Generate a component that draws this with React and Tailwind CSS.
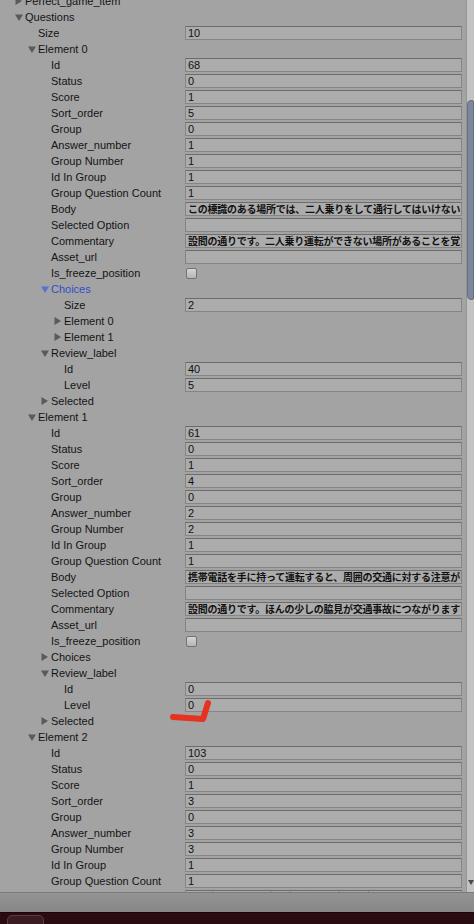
const padByLevel = {
  0: 'pl-[15px]',
  1: 'pl-[28px]',
  2: 'pl-[41px]',
  3: 'pl-[54px]',
};

const BODY0 = 'この標識のある場所では、二人乗りをして通行してはいけない';
const COMM0 = '設問の通りです。二人乗り運転ができない場所があることを覚えておきましょう';
const BODY1 = '携帯電話を手に持って運転すると、周囲の交通に対する注意がおろそかになります';
const COMM1 = '設問の通りです。ほんの少しの脇見が交通事故につながります';
const BODY2 = '交差点付近では、歩行者の動きに十分注意して運転しなければならない';

// [level, label, fold ('open' | 'closed' | null), kind ('field' | 'check' | null), value, blue]
const element = (level, v) => [
  [level + 1, 'Id', null, 'field', v.id],
  [level + 1, 'Status', null, 'field', '0'],
  [level + 1, 'Score', null, 'field', '1'],
  [level + 1, 'Sort_order', null, 'field', v.sort],
  [level + 1, 'Group', null, 'field', '0'],
  [level + 1, 'Answer_number', null, 'field', v.answer],
  [level + 1, 'Group Number', null, 'field', v.answer],
  [level + 1, 'Id In Group', null, 'field', '1'],
  [level + 1, 'Group Question Count', null, 'field', '1'],
  [level + 1, 'Body', null, 'field', v.body],
  [level + 1, 'Selected Option', null, 'field', ''],
  [level + 1, 'Commentary', null, 'field', v.comm],
  [level + 1, 'Asset_url', null, 'field', ''],
  [level + 1, 'Is_freeze_position', null, 'check'],
];

const rows = [
  [0, 'Perfect_game_item', 'closed'],
  [0, 'Questions', 'open'],
  [1, 'Size', null, 'field', '10'],
  [1, 'Element 0', 'open'],
  ...element(1, { id: '68', sort: '5', answer: '1', body: BODY0, comm: COMM0 }),
  [2, 'Choices', 'open', null, null, true],
  [3, 'Size', null, 'field', '2'],
  [3, 'Element 0', 'closed'],
  [3, 'Element 1', 'closed'],
  [2, 'Review_label', 'open'],
  [3, 'Id', null, 'field', '40'],
  [3, 'Level', null, 'field', '5'],
  [2, 'Selected', 'closed'],
  [1, 'Element 1', 'open'],
  ...element(1, { id: '61', sort: '4', answer: '2', body: BODY1, comm: COMM1 }),
  [2, 'Choices', 'closed'],
  [2, 'Review_label', 'open'],
  [3, 'Id', null, 'field', '0'],
  [3, 'Level', null, 'field', '0'],
  [2, 'Selected', 'closed'],
  [1, 'Element 2', 'open'],
  ...element(1, { id: '103', sort: '3', answer: '3', body: BODY2, comm: '' }),
];

const isJa = (s) => /[\u3000-\u9fff]/.test(s);

const Arrow = ({ fold, blue }) => {
  const fill = blue ? '#5a72c8' : '#5a5a5a';
  return (
    <span className="w-[10px] h-[16px] flex items-center shrink-0">
      {fold === 'open' && (
        <svg width="8" height="7" viewBox="0 0 8 7">
          <path d="M0 0.5 L8 0.5 L4 7 Z" fill={fill} />
        </svg>
      )}
      {fold === 'closed' && (
        <svg width="7" height="8" viewBox="0 0 7 8">
          <path d="M0.5 0 L7 4 L0.5 8 Z" fill={fill} />
        </svg>
      )}
    </span>
  );
};

const Row = ({ row }) => {
  const [level, label, fold, kind, value, blue] = row;
  return (
    <div className="flex h-[16px] items-center">
      <div className={`w-[185px] h-full flex items-center shrink-0 ${padByLevel[level]}`}>
        <Arrow fold={fold} blue={blue} />
        <span className={`whitespace-nowrap leading-none ${blue ? 'text-[#2f4fc9]' : 'text-[#141414]'}`}>
          {label}
        </span>
      </div>
      {kind === 'field' && (
        <div className="w-[277px] h-[14px] bg-[#acacac] border border-[#858585] border-t-[#6c6c6c] overflow-hidden flex items-center pl-[2px]">
          <span
            className={
              isJa(value)
                ? 'whitespace-nowrap text-[10px] tracking-[-0.25px] font-bold leading-none text-[#111]'
                : 'whitespace-nowrap leading-none text-[#111]'
            }
            style={isJa(value) ? { fontFamily: '"Noto Sans CJK JP", sans-serif' } : undefined}
          >
            {value}
          </span>
        </div>
      )}
      {kind === 'check' && (
        <div className="ml-[1px] w-[11px] h-[11px] rounded-[2px] border border-[#727272] bg-gradient-to-b from-[#d6d6d6] to-[#b4b4b4]" />
      )}
    </div>
  );
};

export default function App() {
  return (
    <div
      className="relative w-[474px] h-[924px] overflow-hidden bg-[#a3a3a3] text-[11px]"
      style={{ fontFamily: '"Liberation Sans", Arial, sans-serif' }}
    >
      <div className="flex h-[892px]">
        <div className="w-[466px] h-full overflow-hidden">
          <div className="-mt-[7px]">
            {rows.map((r, i) => (
              <Row key={i} row={r} />
            ))}
          </div>
        </div>
        <div className="w-[8px] h-full bg-[#c3c3c3] border-l border-[#969696] flex flex-col">
          <div className="mt-[100px] h-[200px] rounded-l-[4px] rounded-r-[2px] bg-[#7c879c] border border-[#66707f]" />
          <div className="flex-1" />
          <div className="h-[12px] flex justify-center items-start">
            <svg width="6" height="5" viewBox="0 0 6 5">
              <path d="M0 0 L6 0 L3 5 Z" fill="#4a4a4a" />
            </svg>
          </div>
        </div>
      </div>
      <div className="h-[20px] border-t border-[#7b7b7b] bg-gradient-to-b from-[#939393] to-[#878787]" />
      <div className="h-[12px] bg-[#2a0b11] border-t border-[#1a0508] pl-[7px] pt-[2px]">
        <div className="w-[37px] h-[20px] rounded-[5px] border border-[#5b3b41] bg-[#3b1c22]" />
      </div>
      <svg className="absolute left-0 top-0 pointer-events-none" width="474" height="924">
        <path
          d="M173 717 L203 719 L208 703"
          fill="none"
          stroke="#e4331f"
          strokeWidth="6"
          strokeLinecap="round"
          strokeLinejoin="round"
        />
      </svg>
    </div>
  );
}
